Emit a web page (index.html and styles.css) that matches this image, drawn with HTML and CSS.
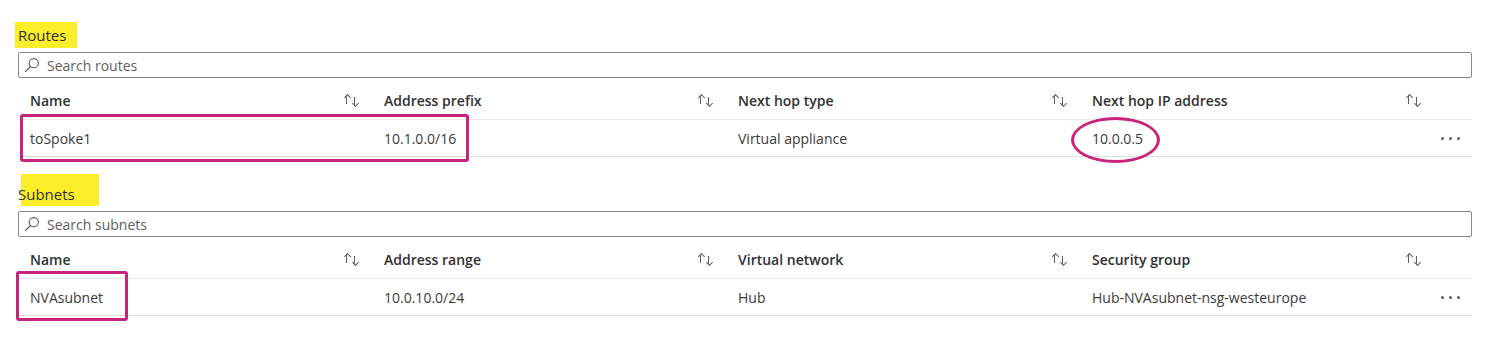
FILE: index.html
```html
<!DOCTYPE html>
<html>

<head>
  <title>Route table</title>
  <link rel="stylesheet" href="styles.css">
</head>

<body>
  <div class="page">

    <!-- Routes -->
    <div class="section">
      <div class="section-title title-routes"><span>Routes</span></div>
      <div class="search">
        <svg class="search-icon" width="16" height="16" viewBox="0 0 16 16">
          <circle cx="9.8" cy="6.2" r="4.6" fill="none" stroke="#605e5c" stroke-width="1.1" />
          <line x1="6.5" y1="9.5" x2="1.6" y2="14.4" stroke="#605e5c" stroke-width="1.3" stroke-linecap="round" />
        </svg>
        <span class="search-text">Search routes</span>
      </div>
      <div class="row head">
        <div class="cell">Name <span class="sort"></span></div>
        <div class="cell">Address prefix <span class="sort"></span></div>
        <div class="cell">Next hop type <span class="sort"></span></div>
        <div class="cell">Next hop IP address <span class="sort"></span></div>
        <div class="cell"></div>
      </div>
      <div class="row">
        <div class="cell">toSpoke1</div>
        <div class="cell">10.1.0.0/16</div>
        <div class="cell">Virtual appliance</div>
        <div class="cell">10.0.0.5</div>
        <div class="cell more"><i></i><i></i><i></i></div>
      </div>
      <div class="mark mark-route"></div>
      <div class="mark mark-ip"></div>
    </div>

    <!-- Subnets -->
    <div class="section">
      <div class="section-title title-subnets"><span>Subnets</span></div>
      <div class="search">
        <svg class="search-icon" width="16" height="16" viewBox="0 0 16 16">
          <circle cx="9.8" cy="6.2" r="4.6" fill="none" stroke="#605e5c" stroke-width="1.1" />
          <line x1="6.5" y1="9.5" x2="1.6" y2="14.4" stroke="#605e5c" stroke-width="1.3" stroke-linecap="round" />
        </svg>
        <span class="search-text">Search subnets</span>
      </div>
      <div class="row head">
        <div class="cell">Name <span class="sort"></span></div>
        <div class="cell">Address range <span class="sort"></span></div>
        <div class="cell">Virtual network <span class="sort"></span></div>
        <div class="cell">Security group <span class="sort"></span></div>
        <div class="cell"></div>
      </div>
      <div class="row">
        <div class="cell">NVAsubnet</div>
        <div class="cell">10.0.10.0/24</div>
        <div class="cell">Hub</div>
        <div class="cell">Hub-NVAsubnet-nsg-westeurope</div>
        <div class="cell more"><i></i><i></i><i></i></div>
      </div>
      <div class="mark mark-subnet"></div>
    </div>

  </div>
</body>

</html>
```

FILE: styles.css
```css
* {
  font-family: "Open Sans", "Noto Sans", sans-serif;
  box-sizing: border-box;
}

body {
  margin: 0;
  background-color: #ffffff;
  color: #323130;
}

.page {
  padding: 22px 25px 0 18px;
}

/* Sections */
.section {
  position: relative;
  margin-bottom: 24px;
}

.section-title {
  position: relative;
  height: 26px;
  line-height: 26px;
  font-size: 15px;
  color: #323130;
}

.section-title span {
  position: relative;
}

/* yellow highlighter behind the titles */
.section-title::before {
  content: "";
  position: absolute;
  background-color: #fcee2a;
}

.title-routes::before {
  left: -3px;
  top: 0;
  width: 62px;
  height: 26px;
}

.title-subnets::before {
  left: 3px;
  top: -7px;
  width: 78px;
  height: 32px;
}

/* Search box */
.search {
  display: flex;
  align-items: center;
  height: 26px;
  margin-top: 4px;
  padding-left: 5px;
  border: 1px solid #8a8886;
  border-radius: 2px;
}

.search-icon {
  flex: none;
}

.search-text {
  margin-left: 7px;
  font-size: 14px;
  color: #605e5c;
}

/* Table rows */
.row {
  display: grid;
  grid-template-columns: repeat(4, 354px) 38px;
  align-items: center;
  height: 37px;
  border-bottom: 1px solid #e1dfdd;
  font-size: 14px;
}

.row.head {
  height: 42px;
  padding-top: 3px;
  border-bottom-color: #edebe9;
  font-weight: 600;
}

.cell {
  display: flex;
  align-items: center;
  padding: 0 12px;
  white-space: nowrap;
  color: #3b3a39;
}

.head .cell {
  color: #323130;
}

.sort {
  width: 18px;
  height: 14px;
  margin-left: auto;
  background:
    linear-gradient(#605e5c, #605e5c) 4px 2px / 1px 9px no-repeat,
    linear-gradient(#605e5c, #605e5c) 12px 4px / 1px 9px no-repeat;
  position: relative;
}

.sort::before,
.sort::after {
  content: "";
  position: absolute;
  width: 4px;
  height: 4px;
  border-left: 1px solid #605e5c;
  border-top: 1px solid #605e5c;
}

.sort::before {
  left: 2.5px;
  top: 2px;
  transform: rotate(45deg);
}

.sort::after {
  left: 10.5px;
  top: 8px;
  transform: rotate(225deg);
}

/* More button */
.more {
  justify-content: flex-start;
  gap: 5px;
  padding: 0 0 0 7px;
}

.more i {
  width: 3px;
  height: 3px;
  border-radius: 50%;
  background-color: #605e5c;
}

/* Magenta annotations */
.mark {
  position: absolute;
  border: 3px solid #c8247b;
}

.mark-route {
  left: 2px;
  top: 92px;
  width: 449px;
  height: 48px;
  border-radius: 3px;
}

.mark-ip {
  left: 1053px;
  top: 95px;
  width: 89px;
  height: 46px;
  border-radius: 50%;
}

.mark-subnet {
  left: -2px;
  top: 90px;
  width: 112px;
  height: 50px;
  border-radius: 3px;
}
```
